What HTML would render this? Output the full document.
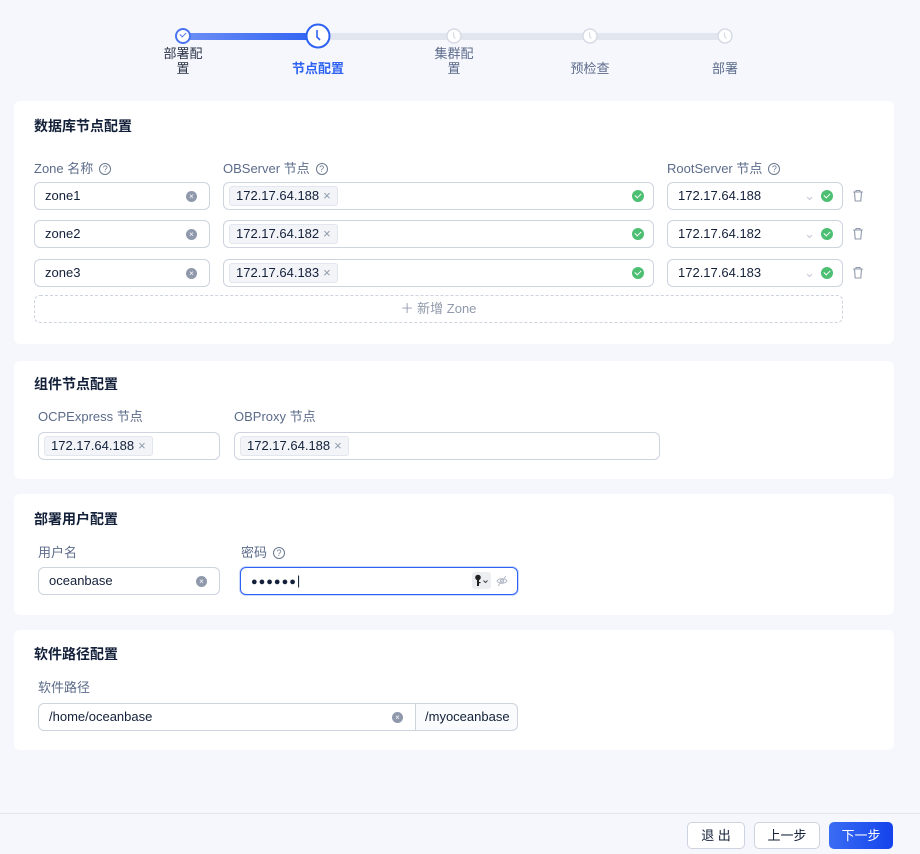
<!DOCTYPE html>
<html><head><meta charset="utf-8"><style>
*{box-sizing:border-box;margin:0;padding:0}
body{width:920px;height:854px;background:#f5f7fc;font-family:"Liberation Sans","Noto Sans CJK SC",sans-serif;position:relative;overflow:hidden;color:#132039}
.a{position:absolute}
.card{position:absolute;left:14px;width:880px;background:#fff;border-radius:6px}
.title{position:absolute;font-size:14px;font-weight:bold;color:#132039}
.lbl{position:absolute;font-size:13px;color:#5c6b8a}
.q{display:inline-block;width:12px;height:12px;border:1px solid #6b7890;border-radius:50%;font-size:9px;line-height:10px;text-align:center;margin-left:6px;vertical-align:1px;color:#6b7890}
.in{position:absolute;height:28px;border:1px solid #cdd3df;border-radius:6px;background:#fff;font-size:13px;line-height:26px;padding-left:10px;color:#132039}
.clr{position:absolute;right:12px;top:8px;width:11px;height:11px;border-radius:50%;background:#8f99ab;color:#fff;font-size:8px;line-height:11px;text-align:center}
.tag{position:absolute;left:5px;top:3px;height:20px;background:#f2f4f8;border:1px solid #e2e6ee;border-radius:3px;font-size:13px;line-height:18px;padding:0 6px;color:#132039}
.tag span{color:#8f99ab;margin-left:4px}
.ok{position:absolute;right:9px;top:7px;width:12px;height:12px;border-radius:50%;background:#4cbf73}
.ok:after{content:"";position:absolute;left:3px;top:3px;width:5px;height:3px;border-left:1.5px solid #fff;border-bottom:1.5px solid #fff;transform:rotate(-45deg)}
.step{position:absolute;font-size:13px;color:#5c6b8a;text-align:center;line-height:15px}
.btn{position:absolute;top:822px;height:27px;border:1px solid #cdd3df;border-radius:5px;background:#fff;font-size:13px;line-height:25px;text-align:center;color:#132039}
</style></head><body>
<div class="a" style="left:183px;top:33px;width:542px;height:7px;background:#e2e6ee;border-radius:3px"></div>
<div class="a" style="left:183px;top:33px;width:135px;height:7px;background:linear-gradient(90deg,#6e8ff5,#2e62f2);border-radius:3px"></div>
<div class="a" style="left:175px;top:28px;width:16px;height:16px;border-radius:50%;background:#fff;border:2px solid #4a74f0"></div>
<div class="a" style="left:180px;top:32px;width:6px;height:4px;border-left:1.5px solid #4a74f0;border-bottom:1.5px solid #4a74f0;transform:rotate(-45deg)"></div>
<svg class="a" style="left:305px;top:23px" width="26" height="26"><circle cx="13" cy="13" r="11.5" fill="#fff" stroke="#2e62f2" stroke-width="2"/><path d="M12 7v7l3 3" fill="none" stroke="#2e62f2" stroke-width="1.6"/></svg>
<svg class="a" style="left:446px;top:28px" width="16" height="16"><circle cx="8" cy="8" r="7" fill="#fff" stroke="#d6dbe6" stroke-width="1.5"/><path d="M7.5 4.5v4l2 2" fill="none" stroke="#d6dbe6" stroke-width="1.2"/></svg>
<svg class="a" style="left:582px;top:28px" width="16" height="16"><circle cx="8" cy="8" r="7" fill="#fff" stroke="#d6dbe6" stroke-width="1.5"/><path d="M7.5 4.5v4l2 2" fill="none" stroke="#d6dbe6" stroke-width="1.2"/></svg>
<svg class="a" style="left:717px;top:28px" width="16" height="16"><circle cx="8" cy="8" r="7" fill="#fff" stroke="#d6dbe6" stroke-width="1.5"/><path d="M7.5 4.5v4l2 2" fill="none" stroke="#d6dbe6" stroke-width="1.2"/></svg>
<div class="step" style="left:160px;top:46px;width:46px;color:#2b3548">部署配<br>置</div>
<div class="step" style="left:288px;top:61px;width:60px;color:#2e62f2;font-weight:bold">节点配置</div>
<div class="step" style="left:431px;top:46px;width:46px">集群配<br>置</div>
<div class="step" style="left:560px;top:61px;width:60px">预检查</div>
<div class="step" style="left:700px;top:61px;width:50px">部署</div>

<div class="card" style="top:101px;height:243px"></div>
<div class="title" style="left:34px;top:116px">数据库节点配置</div>
<div class="lbl" style="left:34px;top:158px">Zone 名称<span class="q">?</span></div>
<div class="lbl" style="left:223px;top:158px">OBServer 节点<span class="q">?</span></div>
<div class="lbl" style="left:667px;top:158px">RootServer 节点<span class="q">?</span></div>

<div class="in" style="left:34px;top:182px;width:176px">zone1<div class="clr">×</div></div>
<div class="in" style="left:223px;top:182px;width:431px"><div class="tag">172.17.64.188<span>×</span></div><div class="ok"></div></div>
<div class="in" style="left:667px;top:182px;width:176px">172.17.64.188<span class="a" style="right:27px;top:0;color:#c5cbd6">⌄</span><div class="ok"></div></div>
<div class="in" style="left:34px;top:220px;width:176px">zone2<div class="clr">×</div></div>
<div class="in" style="left:223px;top:220px;width:431px"><div class="tag">172.17.64.182<span>×</span></div><div class="ok"></div></div>
<div class="in" style="left:667px;top:220px;width:176px">172.17.64.182<span class="a" style="right:27px;top:0;color:#c5cbd6">⌄</span><div class="ok"></div></div>
<div class="in" style="left:34px;top:259px;width:176px">zone3<div class="clr">×</div></div>
<div class="in" style="left:223px;top:259px;width:431px"><div class="tag">172.17.64.183<span>×</span></div><div class="ok"></div></div>
<div class="in" style="left:667px;top:259px;width:176px">172.17.64.183<span class="a" style="right:27px;top:0;color:#c5cbd6">⌄</span><div class="ok"></div></div>
<svg class="a" style="left:852px;top:189px" width="12" height="13"><path d="M1 3h10M4 3V1.5h4V3M2.5 3l.7 9h5.6l.7-9" fill="none" stroke="#8f99ab" stroke-width="1.1"/></svg>
<svg class="a" style="left:852px;top:227px" width="12" height="13"><path d="M1 3h10M4 3V1.5h4V3M2.5 3l.7 9h5.6l.7-9" fill="none" stroke="#8f99ab" stroke-width="1.1"/></svg>
<svg class="a" style="left:852px;top:266px" width="12" height="13"><path d="M1 3h10M4 3V1.5h4V3M2.5 3l.7 9h5.6l.7-9" fill="none" stroke="#8f99ab" stroke-width="1.1"/></svg>
<div class="a" style="left:34px;top:295px;width:809px;height:28px;border:1px dashed #cdd3df;border-radius:6px;text-align:center;font-size:13px;line-height:26px;color:#8f99ab">＋ 新增 Zone</div>

<div class="card" style="top:361px;height:118px"></div>
<div class="title" style="left:34px;top:374px">组件节点配置</div>
<div class="lbl" style="left:38px;top:406px">OCPExpress 节点</div>
<div class="lbl" style="left:234px;top:406px">OBProxy 节点</div>
<div class="in" style="left:38px;top:432px;width:182px"><div class="tag">172.17.64.188<span>×</span></div></div>
<div class="in" style="left:234px;top:432px;width:426px"><div class="tag">172.17.64.188<span>×</span></div></div>

<div class="card" style="top:494px;height:121px"></div>
<div class="title" style="left:34px;top:509px">部署用户配置</div>
<div class="lbl" style="left:38px;top:542px">用户名</div>
<div class="lbl" style="left:241px;top:542px">密码<span class="q">?</span></div>
<div class="in" style="left:38px;top:567px;width:182px">oceanbase<div class="clr">×</div></div>
<div class="in" style="left:240px;top:567px;width:278px;border-color:#2e62f2;border-width:1.5px;box-shadow:0 0 0 1px rgba(46,98,242,.25);font-size:11px;letter-spacing:1px">●●●●●●<span style="font-size:13px">|</span>
<div class="a" style="right:26px;top:4px;width:19px;height:17px;background:#eceef2;border-radius:3px">
<svg class="a" style="left:2px;top:2px" width="16" height="13"><circle cx="4" cy="3.5" r="2.8" fill="#222"/><rect x="3" y="5" width="2" height="7" fill="#222"/><rect x="5" y="8" width="1.5" height="1.2" fill="#222"/><path d="M9.5 6.5l2 2 2-2" fill="none" stroke="#444" stroke-width="1"/></svg></div>
<svg class="a" style="right:9px;top:7px" width="12" height="12"><path d="M1 6c2-3 8-3 10 0c-2 3-8 3-10 0zM2 11L10 1" fill="none" stroke="#b0b7c4" stroke-width="1"/><circle cx="6" cy="6" r="1.7" fill="none" stroke="#b0b7c4"/></svg></div>

<div class="card" style="top:630px;height:120px"></div>
<div class="title" style="left:34px;top:644px">软件路径配置</div>
<div class="lbl" style="left:38px;top:677px">软件路径</div>
<div class="in" style="left:38px;top:703px;width:378px;border-radius:6px 0 0 6px">/home/oceanbase<div class="clr">×</div></div>
<div class="in" style="left:415px;top:703px;width:103px;border-radius:0 6px 6px 0;background:#fafbfc;padding-left:9px">/myoceanbase</div>

<div class="a" style="left:0;top:813px;width:920px;height:1px;background:#e2e6ee"></div>
<div class="btn" style="left:687px;width:58px">退 出</div>
<div class="btn" style="left:754px;width:66px">上一步</div>
<div class="btn" style="left:829px;width:64px;border:none;background:linear-gradient(90deg,#3a6cf4,#1443eb);color:#fff;line-height:27px">下一步</div>
</body></html>
